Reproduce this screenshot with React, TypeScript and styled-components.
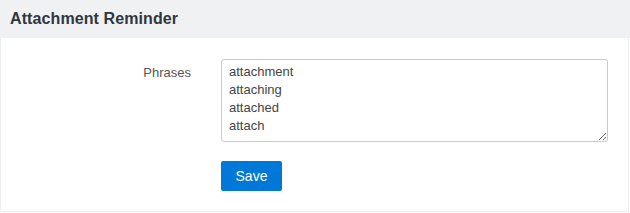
import React from "react";
import styled, { createGlobalStyle } from "styled-components";

const GlobalStyle = createGlobalStyle`
    html, body {
        margin: 0;
        padding: 0;
        background: #fff;
    }
    body {
        font-family: "Liberation Sans", Arial, sans-serif;
    }
`;

const Panel = styled.div`
    width: 630px;
    height: 213px;
    box-sizing: border-box;
    display: flex;
    flex-direction: column;
`;

const Header = styled.div`
    height: 38px;
    flex: none;
    background: #f0f1f3;
    display: flex;
    align-items: center;
    padding-left: 10px;
`;

const Title = styled.h1`
    margin: 0;
    font-size: 16px;
    font-weight: 700;
    color: #2f3640;
    letter-spacing: 0.1px;
`;

const Body = styled.div`
    flex: 1;
    box-sizing: border-box;
    border: 1px solid #eceef0;
    border-top: none;
    margin-right: 1px;
    margin-bottom: 1px;
    padding-top: 21px;
    display: grid;
    grid-template-columns: 190px 387px;
    column-gap: 30px;
    row-gap: 19px;
    align-content: start;
`;

const Label = styled.label`
    text-align: right;
    font-size: 13px;
    color: #555;
    padding-top: 6px;
`;

const TextArea = styled.textarea`
    box-sizing: border-box;
    width: 387px;
    height: 83px;
    margin: 0;
    padding: 3px 7px;
    border: 1px solid #c3cbd3;
    border-radius: 3px;
    font-family: "Liberation Sans", Arial, sans-serif;
    font-size: 13px;
    line-height: 18px;
    color: #444;
    resize: vertical;
    outline: none;
    overflow: hidden;
`;

const Spacer = styled.div``;

const Button = styled.button`
    width: 61px;
    height: 30px;
    border: none;
    border-radius: 2px;
    background: #0078d7;
    color: #fff;
    font-family: "Liberation Sans", Arial, sans-serif;
    font-size: 14px;
    padding: 0;
    cursor: pointer;
`;

const phrases = ["attachment", "attaching", "attached", "attach"];

const App: React.FC = () => {
    return (
        <>
            <GlobalStyle />
            <Panel>
                <Header>
                    <Title>Attachment Reminder</Title>
                </Header>
                <Body>
                    <Label htmlFor="phrases">Phrases</Label>
                    <TextArea id="phrases" defaultValue={phrases.join("\n")} />
                    <Spacer />
                    <Button>Save</Button>
                </Body>
            </Panel>
        </>
    );
};

export default App;
